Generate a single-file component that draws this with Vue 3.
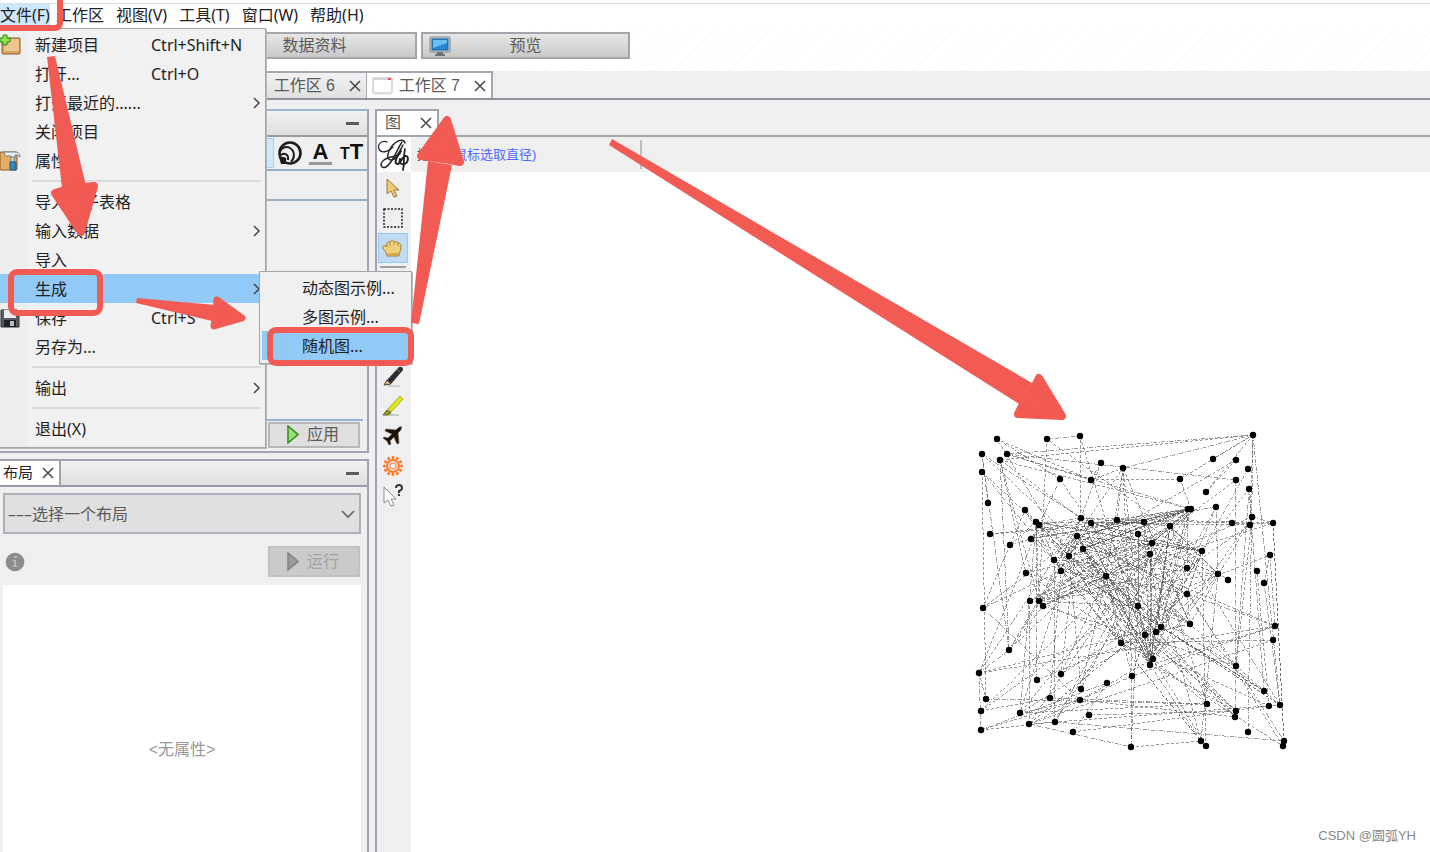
<script setup>
const menus = ['文件(F)', '工作区', '视图(V)', '工具(T)', '窗口(W)', '帮助(H)']

const fileMenu = [
  { label: '新建项目', keys: 'Ctrl+Shift+N', icon: 'new' },
  { label: '打开...', keys: 'Ctrl+O' },
  { label: '打开最近的......', sub: true },
  { label: '关闭项目' },
  { label: '属性', icon: 'props' },
  { sep: true },
  { label: '导入电子表格' },
  { label: '输入数据', sub: true },
  { label: '导入' },
  { label: '生成', sub: true, active: true },
  { label: '保存', keys: 'Ctrl+S', icon: 'save' },
  { label: '另存为...' },
  { sep: true },
  { label: '输出', sub: true },
  { sep: true },
  { label: '退出(X)' },
]

const generateMenu = ['动态图示例...', '多图示例...', '随机图...']

const nodes = [
  [997, 439], [982, 454], [1007, 454], [1000, 460], [982, 472], [1047, 439], [1080, 436], [1101, 463],
  [1123, 468], [1060, 479], [1091, 480], [988, 503], [1025, 510], [1036, 522], [1039, 525], [990, 534],
  [1010, 545], [1031, 539], [1081, 518], [1091, 523], [1117, 520], [1077, 536], [1083, 549], [1054, 560],
  [1069, 556], [1061, 571], [1026, 573], [1106, 576], [1138, 534], [1253, 435], [1213, 459], [1236, 460],
  [1248, 469], [1180, 479], [1236, 480], [1249, 489], [1206, 492], [1188, 509], [1191, 509], [1216, 507],
  [1144, 522], [1170, 526], [1232, 523], [1252, 517], [1250, 525], [1273, 523], [1152, 543], [1150, 554],
  [1202, 551], [1187, 568], [1218, 574], [1228, 580], [1270, 555], [1257, 571], [1264, 583], [983, 608],
  [1030, 601], [1039, 601], [1043, 606], [1009, 650], [1138, 606], [1121, 643], [979, 673], [1037, 680],
  [1061, 674], [1132, 676], [1107, 683], [1081, 689], [1080, 700], [1050, 698], [986, 699], [981, 711],
  [1020, 713], [1029, 724], [1055, 722], [1089, 715], [1073, 732], [981, 730], [1131, 747], [1187, 594],
  [1190, 624], [1161, 627], [1156, 632], [1145, 635], [1153, 659], [1150, 665], [1275, 626], [1273, 640],
  [1236, 666], [1264, 691], [1269, 706], [1280, 705], [1207, 704], [1236, 711], [1235, 717], [1248, 732],
  [1201, 741], [1206, 746], [1284, 741], [1283, 746],
]

const pairs = [
  [5, 6], [5, 57], [29, 2], [29, 3], [29, 8], [29, 33], [29, 30], [29, 36], [29, 91], [29, 44], [29, 95],
  [0, 10], [0, 9], [2, 10], [2, 38], [3, 38], [2, 34], [1, 22], [1, 18], [4, 14], [4, 23], [4, 70], [1, 59],
  [1, 11], [3, 59], [3, 26], [0, 24], [7, 18], [7, 10], [8, 20], [8, 27], [8, 10], [9, 14], [10, 33],
  [13, 24], [15, 19], [16, 17], [42, 45], [43, 45], [19, 44], [20, 42], [45, 98], [52, 86], [52, 54],
  [35, 88], [43, 88], [34, 94], [31, 36], [32, 48], [35, 48], [62, 59], [62, 70], [62, 77], [71, 69],
  [70, 92], [77, 74], [77, 66], [77, 68], [73, 78], [73, 91], [78, 65], [78, 96], [74, 98], [88, 91],
  [88, 98], [88, 80], [79, 88], [60, 88], [58, 88], [81, 89], [82, 93], [61, 99], [85, 96], [84, 97],
  [73, 65], [72, 68], [76, 66], [68, 94], [75, 93], [76, 90], [69, 92], [72, 92], [59, 58], [59, 19],
  [59, 21], [55, 12], [55, 68], [86, 65], [87, 61], [87, 73], [86, 79], [62, 86], [63, 13], [64, 21],
  [72, 13], [73, 56], [74, 23], [69, 25], [67, 27], [67, 24], [91, 54], [90, 53], [89, 35], [98, 45],
  [96, 50], [97, 48], [78, 60], [65, 8],
]

function isCentral([x, y]) {
  return x > 1030 && x < 1225 && y > 495 && y < 670
}

function randomPairs(count) {
  const out = []
  let seed = 4711
  const next = () => {
    seed = (seed * 16807) % 2147483647
    return Math.floor((seed / 2147483647) * nodes.length)
  }
  while (out.length < count) {
    const a = next()
    const b = next()
    if (a !== b && isCentral(nodes[a]) && (isCentral(nodes[b]) || out.length % 2)) out.push([a, b])
  }
  return out
}

const edges = [...pairs, ...randomPairs(230)].map(([a, b]) => ({
  x1: nodes[a][0], y1: nodes[a][1], x2: nodes[b][0], y2: nodes[b][1],
}))

const rays = Array.from({ length: 12 }, (_, i) => {
  const t = (i * Math.PI) / 6
  return [Math.cos(t), Math.sin(t)]
})
</script>

<template>
  <div class="app">
    <nav class="menubar">
      <button v-for="(m, i) in menus" :key="m" :class="{ open: i === 0 }">{{ m }}</button>

      <ul class="menu file-menu">
        <li v-for="(it, i) in fileMenu" :key="i" :class="{ sep: it.sep }">
          <button v-if="!it.sep" class="item" :class="{ active: it.active }">
            <span class="slot">
              <svg v-if="it.icon === 'new'" width="22" height="22" viewBox="0 0 22 22">
                <rect x="2" y="4" width="18" height="16" rx="1" fill="#d9a765" stroke="#8a5a2a" />
                <rect x="4" y="5" width="15" height="12" fill="#edc68d" />
                <path d="M3 1h4v3h3v4h-3v3h-4v-3h-3v-4h3z" fill="#8fe04e" stroke="#2c8a17" />
              </svg>
              <svg v-else-if="it.icon === 'props'" width="22" height="22" viewBox="0 0 22 22">
                <rect x="0" y="2" width="17" height="18" rx="1" fill="#e4ad62" stroke="#8a5a2a" />
                <path d="M4 2h11q5 0 5 5l-3-2h-2v3h-4V6H5z" fill="#e8edf0" stroke="#77848c" />
                <rect x="11" y="7" width="3" height="6" fill="#dde6ea" stroke="#6d7b85" />
                <path d="M10 12h6v8h-6z" fill="#3987bd" stroke="#1f5580" />
              </svg>
              <svg v-else-if="it.icon === 'save'" width="22" height="22" viewBox="0 0 22 22">
                <path d="M1 3h16l2 2v15H1z" fill="#565c61" stroke="#2d3033" />
                <rect x="4" y="3" width="12" height="8" fill="#e9edf0" />
                <rect x="4" y="13" width="12" height="7" fill="#202224" />
                <rect x="10" y="14" width="4" height="5" fill="#b9bfc4" />
              </svg>
            </span>
            <span class="label">{{ it.label }}</span>
            <span class="keys">{{ it.keys }}</span>
            <svg v-if="it.sub" class="chev" width="8" height="12" viewBox="0 0 8 12">
              <path d="M1 1l5 5-5 5" fill="none" stroke="#444" stroke-width="1.5" />
            </svg>
          </button>
        </li>
      </ul>

      <ul class="menu sub-menu">
        <li v-for="(g, i) in generateMenu" :key="g">
          <button class="item" :class="{ active: i === 2 }">{{ g }}</button>
        </li>
      </ul>
    </nav>

    <div class="views">
      <button class="view">数据资料</button>
      <button class="view">
        <svg class="monitor" width="22" height="22" viewBox="0 0 22 22">
          <rect x="1" y="2" width="20" height="15" rx="1" fill="#d2d5d6" stroke="#7d8285" />
          <rect x="3" y="4" width="16" height="11" fill="#2388cf" stroke="#17639c" />
          <path d="M4 5h14v3L4 13z" fill="#6bbdf0" />
          <path d="M8 17h6v2h2v2H6v-2h2z" fill="#6d7275" />
        </svg>
        预览
      </button>
    </div>

    <div class="workspaces">
      <button class="ws first"><span>工作区 6</span>
        <svg width="12" height="12" viewBox="0 0 12 12"><path d="M1 1l10 10M11 1L1 11" stroke="#4c4c4c" stroke-width="1.6" /></svg>
      </button>
      <button class="ws current">
        <svg width="21" height="18" viewBox="0 0 21 18">
          <rect x="1" y="1" width="19" height="15" rx="1" fill="#fff" stroke="#b9b9bb" />
          <path d="M1 2h18" stroke="#d5d5d8" stroke-width="2" />
          <path d="M16 2h3" stroke="#e2574f" stroke-width="2" />
          <path d="M2 17h17" stroke="#ddd" />
        </svg>
        <span>工作区 7</span>
        <svg width="12" height="12" viewBox="0 0 12 12"><path d="M1 1l10 10M11 1L1 11" stroke="#4c4c4c" stroke-width="1.6" /></svg>
      </button>
    </div>

    <main class="main">
      <div class="side">
        <section class="panel appearance">
          <header class="head"><span class="min"></span></header>
          <div class="tools">
            <button class="picked" aria-label="颜色选项"></button>
            <button aria-label="大小">
              <svg width="26" height="26" viewBox="0 0 26 26" fill="none" stroke="#1c1c1c">
                <circle cx="13" cy="13" r="10.5" stroke-width="2.6" />
                <path d="M3 11c2-4 7-5 10-3 5 3 5 10 1 14" stroke-width="2" />
                <path d="M4 15c4-3 8 0 7 5" stroke-width="2" />
                <path d="M2 17h5a3 3 0 0 1 2 4l1 3H4z" fill="#1c1c1c" stroke="none" />
              </svg>
            </button>
            <button aria-label="标签颜色"><span class="glyph-a">A</span></button>
            <button aria-label="标签尺寸"><span class="glyph-t"><small>T</small>T</span></button>
          </div>
          <div class="strip"></div>
          <div class="body"></div>
          <footer class="foot">
            <button class="push">
              <svg width="12" height="20" viewBox="0 0 12 20"><path d="M1 1v17l10-8.500z" fill="#9be07a" stroke="#2f8f1c" stroke-width="1.5" /></svg>
              应用
            </button>
          </footer>
        </section>

        <section class="panel layout">
          <header class="head">
            <h2>布局
              <svg width="12" height="12" viewBox="0 0 12 12"><path d="M1 1l10 10M11 1L1 11" stroke="#4c4c4c" stroke-width="1.6" /></svg>
            </h2>
            <span class="min"></span>
          </header>
          <div class="picker">
            <select aria-label="布局"><option>–––选择一个布局</option></select>
            <svg width="14" height="10" viewBox="0 0 14 10"><path d="M1 1l6 6 6-6" fill="none" stroke="#666" stroke-width="1.6" /></svg>
          </div>
          <div class="run-row">
            <svg width="20" height="20" viewBox="0 0 20 20">
              <circle cx="10" cy="10" r="9.300" fill="#8c8c8c" />
              <path d="M9 4h3v2h-3zM7 8h4v6h2v1H7v-1h2V9H7z" fill="#b9b9b9" />
            </svg>
            <button class="push" disabled>
              <svg width="12" height="20" viewBox="0 0 12 20"><path d="M1 1v17l10-8.500z" fill="#9a9a9a" stroke="#838383" stroke-width="1.500" /></svg>
              运行
            </button>
          </div>
          <div class="props">&lt;无属性&gt;</div>
        </section>
      </div>

      <section class="graph">
        <header class="graph-head">
          <h2>图
            <svg width="12" height="12" viewBox="0 0 12 12"><path d="M1 1l10 10M11 1L1 11" stroke="#4c4c4c" stroke-width="1.6" /></svg>
          </h2>
        </header>
        <div class="hint">
          <svg class="logo" width="34" height="35" viewBox="0 0 34 35" fill="none" stroke="#262626" stroke-linecap="round">
            <path d="M10 5C5 3 0 7 2 12c2 5 9 3 14-2" stroke-width="1.300" />
            <path d="M28 6C27 1 20 3 15 9c-5 6-6 14-1 14 5 0 9-9 12-15" stroke-width="1.500" />
            <path d="M25 5C19 14 16 26 9 30c-5 2-7-3-2-7 5-4 12-3 16-6" stroke-width="1.500" />
            <path d="M24 14c-5 6-7 12-4 13 3 1 5-7 8-8 4-1 4 7-1 8-4 1-5-3-4-5" stroke-width="2" />
            <path d="M28 12c-2 8 0 14-2 21" stroke-width="1.800" />
          </svg>
          <span>拖动 <b>(鼠标选取直径)</b></span>
          <i></i>
        </div>
        <div class="work">
          <div class="toolbar">
            <button aria-label="选择">
              <svg width="22" height="24" viewBox="0 0 22 24"><path d="M5 3v15l4-3 3 6 3-1-3-6h5z" fill="#edca73" stroke="#9b7a43" /></svg>
            </button>
            <button aria-label="矩形选择">
              <svg width="22" height="24" viewBox="0 0 22 24"><rect x="2" y="3" width="18" height="18" fill="none" stroke="#222" stroke-width="1.500" stroke-dasharray="2 1.500" /></svg>
            </button>
            <button class="on" aria-label="拖动">
              <svg width="22" height="24" viewBox="0 0 22 24">
                <path d="M5 20l-1-4-3-3c-1-3 1-4 3-3l1 1c-1-4 1-6 3-5 1-2 3-2 4 0 2-1 3 0 3 1 3-1 4 2 4 4 0 4-2 5-2 9z" fill="#f0cf79" stroke="#a17a34" />
                <path d="M8 6v4M12 6v3M16 7v3" stroke="#b98e40" />
                <path d="M6 18h10" stroke="#d8a84a" stroke-width="2" />
              </svg>
            </button>
            <hr>
            <button class="after" aria-label="画笔">
              <svg width="22" height="24" viewBox="0 0 22 24">
                <path d="M6 22h12" stroke="#d0d0d0" stroke-width="2" />
                <path d="M5 16L17 3q4-1 4 3L9 20z" fill="#2c2e30" /><path d="M15 5l3 3" stroke="#777" />
                <path d="M2 21l3-5 4 4z" fill="#d9b37c" stroke="#55422c" />
              </svg>
            </button>
            <button aria-label="荧光笔">
              <svg width="22" height="24" viewBox="0 0 22 24">
                <path d="M5 21h12" stroke="#c8c8c8" stroke-width="2" />
                <path d="M6 15L18 2l3 3L9 18z" fill="#e1e51a" stroke="#aaae20" />
                <path d="M1 21l4-5 4 3-4 2z" fill="#9da019" stroke="#59601c" />
              </svg>
            </button>
            <button aria-label="最短路径">
              <svg width="22" height="24" viewBox="0 0 22 24"><path d="M20 3c-2-1-4 1-6 3L4 5 3 7l7 3-4 4-4-1-1 1 4 3 2 4 2-1-1-3 4-4 3 7 2-1-1-10c2-2 4-4 3-5z" fill="#17130e" stroke="#6a5330" stroke-width=".6" /></svg>
            </button>
            <button aria-label="热力图">
              <svg width="22" height="24" viewBox="-11 -12 22 24" stroke="#fb7623" fill="none">
                <circle r="3" stroke="#fa9a7c" stroke-width="1.500" /><circle r="6" stroke-width="2" />
                <circle v-for="(r, i) in rays" :key="i" :cx="r[0] * 8.6" :cy="r[1] * 8.6" r="1.500" fill="#fb7623" stroke="none" />
              </svg>
            </button>
            <button aria-label="帮助">
              <svg width="22" height="24" viewBox="0 0 22 24">
                <path d="M2 3v16l4-3 3 6 3-1-3-6h5z" fill="#fff" stroke="#8a8a8a" />
                <path d="M14 4q0-3 3-3t3 3q0 2-3 3v2M17 10v2" fill="none" stroke="#333" stroke-width="2" />
              </svg>
            </button>
          </div>
          <div class="canvas">
            <svg class="net" width="330" height="340" viewBox="970 420 330 340">
              <line v-for="(e, i) in edges" :key="i" v-bind="e" class="edge" :stroke-dasharray="i % 2 ? '3 2' : '4 1 1 2'" />
              <circle v-for="(n, i) in nodes" :key="'n' + i" :cx="n[0]" :cy="n[1]" r="3.200" />
            </svg>
            <p class="credit">CSDN @圆弧YH</p>
          </div>
        </div>
      </section>
    </main>

    <svg class="marks" width="1430" height="852" viewBox="0 0 1430 852" aria-hidden="true">
      <g fill="none" stroke="#f15b54">
        <rect x="-12" y="-12" width="72" height="40" rx="5" stroke-width="6" />
        <rect x="11" y="272" width="89" height="41" rx="6" stroke-width="6" />
        <rect x="270" y="330" width="141" height="33" rx="6" stroke-width="6" />
      </g>
      <g fill="#f15b54">
        <path d="M47 57l8-1 31 130-24 2z" />
        <path d="M137 298l78 7-3 16-76-18z" />
        <path d="M411 323l8 1 33-159-24-4z" />
        <path d="M612 139l-3 6 410 259 13-21z" />
      </g>
      <g fill="#f15b54" stroke="#f15b54" stroke-width="8" stroke-linejoin="round">
        <path d="M55 193l10-3 19-3 10-1-13 46z" />
        <path d="M217 300l25 18-28 8 2-10z" stroke-width="7" />
        <path d="M447 120l13 42-10-2-21-3-8-1z" />
        <path d="M1039 378l23 38-44-2 4-8 14-22z" />
      </g>
    </svg>
  </div>
</template>

<style>
body { margin: 0; }
</style>

<style scoped>
* { box-sizing: border-box; }
.app {
  position: relative;
  display: flex;
  flex-direction: column;
  min-height: 100vh;
  overflow: hidden;
  background: #efefef;
  color: #5a5a5a;
  font: 16px/20px "Liberation Sans", "Noto Sans CJK SC", sans-serif;
}
button, select { font: inherit; color: inherit; margin: 0; padding: 0; border: 0; background: none; border-radius: 0; }
h2 { margin: 0; font: inherit; }
svg { display: block; flex: none; }

.menubar {
  position: relative;
  z-index: 2;
  display: flex;
  height: 28px;
  padding: 4px 0 2px;
  background: linear-gradient(#fff 3px, #dedede 3px, #dedede 4px, #fff 4px);
  color: #222;
  font-family: "Noto Sans", "Noto Sans CJK SC", sans-serif;
}
.menubar > button { padding: 0 6px; white-space: nowrap; }
.menubar > .open { background: #cce8ff; padding: 0; }

.menu {
  position: absolute;
  margin: 0;
  padding: 1px 4px 3px 0;
  list-style: none;
  background: #f0f0f0;
  border: 1px solid #a5a5a5;
  box-shadow: 1px 1px 0 #b9b9b9;
}
.file-menu { top: 28px; left: -1px; width: 267px; padding-bottom: 4px; background: linear-gradient(90deg, #eee 28px, #f1f1f1 28px); }
.sub-menu { top: 271px; left: 259px; width: 153px; padding: 1px 2px 3px; }
.item { display: flex; align-items: center; width: 100%; height: 29px; text-align: left; white-space: nowrap; }
.item.active { background: #91c9f7; }
.slot { width: 35px; }
.label { width: 116px; white-space: nowrap; }
.keys { flex: 1; }
.sep { height: 12px; padding: 5px 0 0 32px; }
.sep::before { content: ""; display: block; height: 2px; background: #d9d9d9; }
.sub-menu .item { padding-left: 40px; }

.views {
  display: flex;
  gap: 4px;
  height: 43px;
  padding: 4px 0 12px 212px;
  background: repeating-linear-gradient(135deg, #fff 0 12px, #fafafa 12px 13px);
}
.view {
  position: relative;
  width: 205px;
  flex: none;
  border: 2px solid #a4a5aa;
  background: linear-gradient(#e6e6e6, #d9d9d9 50%, #c9c9c9);
}
.view + .view { width: 209px; }
.monitor { position: absolute; left: 6px; top: 1px; }

.workspaces {
  display: flex;
  height: 29px;
  padding-left: 212px;
  border-bottom: 2px solid #8f919d;
  background: #efefef;
}
.ws { display: flex; align-items: center; justify-content: flex-end; gap: 14px; width: 155px; padding-right: 5px; border: 2px solid #a4a6b0; border-width: 2px 1px 0 0; background: linear-gradient(#f2f2f2, #e0e0e0); white-space: nowrap; }
.ws.current { width: 126px; gap: 6px; background: #fff; border-right-width: 2px; }
.ws.current span { margin-right: 8px; }

.main { flex: 1; display: flex; gap: 6px; padding-top: 9px; }
.side { display: flex; flex-direction: column; gap: 6px; width: 369px; flex: none; }
.panel { display: flex; flex-direction: column; border: 2px solid #a2a3ae; border-left: 0; }
.head { display: flex; align-items: center; height: 26px; flex: none; background: linear-gradient(#f2f2f2, #dfdfdf); border-bottom: 2px solid #9799a4; }
.head h2 { display: flex; align-items: center; gap: 9px; align-self: stretch; padding: 0 5px 0 3px; background: #fff; border-right: 2px solid #a2a3ae; color: #222; font-size: 15px; white-space: nowrap; }
.min { width: 13px; height: 3px; margin: 0 8px 0 auto; background: #5b5b5b; }

.appearance { height: 344px; border-top-color: #9bb3cc; }
.tools { display: flex; justify-content: flex-end; height: 34px; border-bottom: 2px solid #96afc9; }
.tools button { display: flex; align-items: center; justify-content: center; width: 31px; margin: 1px 0; color: #111; font-weight: 700; }
.tools .picked { border: 1px solid #99d1ff; background: #cce8ff; }
.glyph-a { width: 23px; border-bottom: 3px solid #999; font-size: 22px; line-height: 20px; }
.glyph-t { font-size: 22px; line-height: 22px; }
.glyph-t small { font-size: 16px; }
.strip { height: 30px; border-bottom: 2px solid #96afc9; }
.body { flex: 1; }
.foot { margin-right: 4px; padding: 1px 3px 3px 0; border-top: 2px solid #96b3d3; }
.push { display: flex; align-items: center; gap: 8px; width: 92px; height: 26px; margin-left: auto; padding-left: 17px; border: 2px solid #b7b7ba; background: #dfdfdf; white-space: nowrap; }
.push:disabled { height: 31px; border-color: #c1c1c3; background: #cacaca; color: #a2a2a2; }

.layout { flex: 1; border-bottom: 0; }
.picker { position: relative; margin: 6px 6px 0 3px; font-family: "Noto Sans", "Noto Sans CJK SC", sans-serif; }
.picker select { display: block; width: 100%; height: 41px; padding-left: 3px; appearance: none; border: 2px solid #aeafb8; background: #e0e0e0; }
.picker svg { position: absolute; right: 6px; top: 17px; }
.run-row { display: flex; align-items: center; height: 31px; margin: 12px 7px 8px 5px; }
.props { display: flex; flex: 1; align-items: center; justify-content: center; min-height: 240px; margin: 0 6px 0 3px; padding-top: 62px; background: #fff; color: #999; }

.graph { flex: 1; display: flex; flex-direction: column; min-width: 0; border-left: 2px solid #a2a3ae; }
.graph-head { height: 28px; border-bottom: 2px solid #a2a4ae; }
.graph-head h2 { display: flex; align-items: center; justify-content: space-between; width: 62px; height: 26px; padding: 0 5px 0 8px; background: #fff; border: 2px solid #a2a3ae; border-width: 2px 2px 0 0; }
.hint { display: flex; align-items: center; height: 35px; font-size: 13px; }
.logo { background: #fff; margin-right: 6px; }
.hint b { margin-left: 3px; font-weight: 400; color: #5068ff; }
.hint span { width: 223px; white-space: nowrap; }
.hint i { width: 2px; height: 29px; background: #bdbdbd; }
.work { flex: 1; display: flex; }
.toolbar { display: flex; flex-direction: column; width: 34px; padding: 1px 3px 0 1px; }
.toolbar button { display: flex; align-items: center; justify-content: center; height: 30px; }
.toolbar .on { border: 1px solid #99c9ef; background: #c0dcf3; }
.toolbar hr { width: 26px; height: 2px; margin: 3px 2px; border: 0; background: #a0a0a0; }
.toolbar .after { margin-top: 90px; }
.canvas { position: relative; flex: 1; background: #fff; }
.net { position: absolute; left: 559px; top: 248px; }
.edge { stroke: #555; stroke-width: .6; shape-rendering: crispEdges; }
.credit { position: absolute; right: 14px; bottom: 6px; margin: 0; color: #888; font-size: 13px; }

.marks { position: absolute; z-index: 3; top: 0; left: 0; pointer-events: none; }
</style>
